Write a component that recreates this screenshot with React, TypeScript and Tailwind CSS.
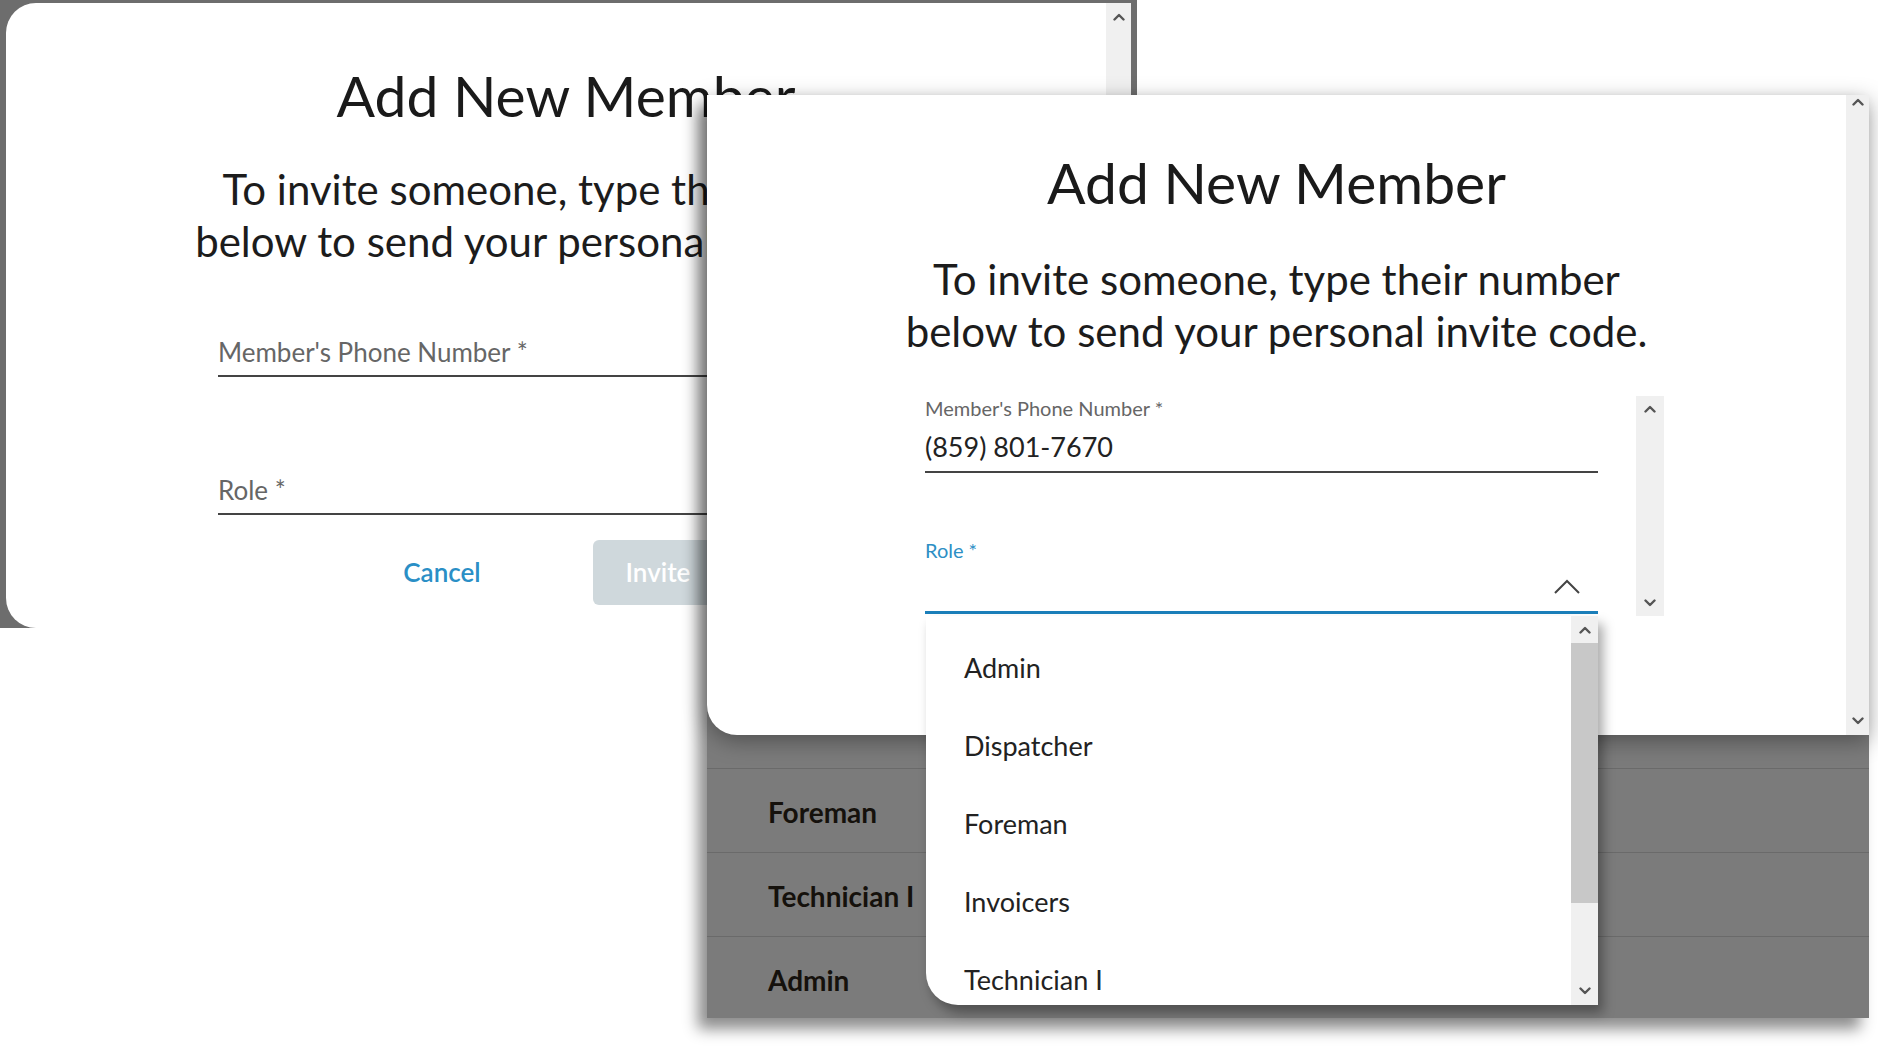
import React from "react";

const MENU_ROLES = ["Admin", "Dispatcher", "Foreman", "Invoicers", "Technician I"];
const TABLE_ROLES = ["Foreman", "Technician I", "Admin"];

function Arrow({ up }: { up?: boolean }) {
  return (
    <svg width="12" height="8" viewBox="0 0 12 8" fill="none" stroke="#555" strokeWidth="2.4" strokeLinecap="round" strokeLinejoin="round">
      {up ? <polyline points="1.5,6.5 6,2 10.5,6.5" /> : <polyline points="1.5,1.5 6,6 10.5,1.5" />}
    </svg>
  );
}

function BackShot() {
  return (
    <div className="absolute left-0 top-0 w-[1137px] h-[628px] bg-[#6d6d6d] pt-[3px] px-[6px]">
      <div className="flex h-full bg-white rounded-l-[30px] overflow-hidden">
        <div className="flex-1 flex flex-col items-center pt-[60px] pl-[20px]">
          <h1 className="text-[57px] leading-[64px] text-[#1a1a1a]">Add New Member</h1>
          <p className="mt-[36px] text-[42px] leading-[52px] text-center text-[#1c1c1c]">
            To invite someone, type their number
            <br />
            below to send your personal invite code.
          </p>
          <div className="mt-[70px] mr-[23px] w-[673px] flex flex-col">
            <div className="border-b-2 border-[#444] pb-[8px]">
              <span className="block text-[26px] leading-[30px] text-[#666]">Member's Phone Number *</span>
            </div>
            <div className="mt-[98px] border-b-2 border-[#444] pb-[8px]">
              <span className="block text-[26px] leading-[30px] text-[#666]">Role *</span>
            </div>
          </div>
          <div className="mt-[25px] mr-[32px] flex gap-[86px]">
            <button className="w-[130px] h-[65px] rounded-[6px] text-[26px] font-semibold text-[#2a8fc6]">Cancel</button>
            <button className="w-[130px] h-[65px] rounded-[6px] bg-[#cfd8dc] text-[26px] font-semibold text-white">Invite</button>
          </div>
        </div>
        <div className="w-[25px] bg-[#f0f0f0] flex justify-center pt-[10px]">
          <Arrow up />
        </div>
      </div>
    </div>
  );
}

function FrontShot() {
  return (
    <div className="absolute left-[707px] top-[95px] w-[1162px] h-[923px] bg-[#7b7b7b] shadow-[-9px_11px_14px_rgba(0,0,0,0.45)]">
      {/* table behind the overlay */}
      <div className="pt-[589px] flex flex-col">
        <div className="h-[84px] flex items-center pl-[61px] pb-[14px]">
          <span className="text-[28px] font-bold text-[#15110c]">Dispatcher</span>
        </div>
        {TABLE_ROLES.map((r) => (
          <div key={r} className="h-[84px] border-t border-[#6a6a6a] flex items-center pl-[61px] pt-[2px]">
            <span className="text-[28px] font-bold text-[#15110c]">{r}</span>
          </div>
        ))}
      </div>

      {/* modal */}
      <div className="absolute left-0 top-0 right-0 h-[640px] flex bg-white rounded-bl-[30px] shadow-[0_6px_22px_rgba(0,0,0,0.35)]">
        <div className="flex-1 flex flex-col items-center pt-[55px]">
          <h1 className="text-[57px] leading-[64px] text-[#1a1a1a]">Add New Member</h1>
          <p className="mt-[39px] text-[42px] leading-[52px] text-center text-[#1c1c1c]">
            To invite someone, type their number
            <br />
            below to send your personal invite code.
          </p>
          <div className="mt-[39px] self-stretch pl-[218px] flex h-[220px]">
            <div className="w-[673px] flex flex-col">
              <div className="border-b-2 border-[#444] pb-[7px] pt-[1px]">
                <span className="block text-[20px] leading-[22px] text-[#666]">Member's Phone Number *</span>
                <span className="block mt-[11px] text-[27px] leading-[34px] text-[#222]">(859) 801-7670</span>
              </div>
              <div className="mt-[66px] border-b-[3px] border-[#1b7fba]">
                <span className="block text-[20px] leading-[22px] text-[#2d8fc5]">Role *</span>
                <div className="h-[50px] flex items-center justify-end pr-[17px]">
                  <svg width="28" height="16" viewBox="0 0 28 16" fill="none" stroke="#444" strokeWidth="2">
                    <polyline points="2,15 14,3 26,15" />
                  </svg>
                </div>
              </div>
            </div>
            <div className="ml-[38px] w-[28px] bg-[#f0f0f0] flex flex-col items-center justify-between py-[9px]">
              <Arrow up />
              <Arrow />
            </div>
          </div>
        </div>
        <div className="w-[23px] bg-[#f0f0f0] flex flex-col items-center justify-between pt-[3px] pb-[10px]">
          <Arrow up />
          <Arrow />
        </div>
      </div>

      {/* open role menu */}
      <div className="absolute left-[219px] top-[521px] w-[672px] h-[389px] flex bg-white rounded-bl-[32px] overflow-hidden shadow-[5px_8px_12px_rgba(0,0,0,0.35)]">
        <ul className="flex-1 pt-[13px]">
          {MENU_ROLES.map((r) => (
            <li key={r} className="h-[78px] flex items-center pl-[38px] text-[27px] text-[#222]">
              {r}
            </li>
          ))}
        </ul>
        <div className="w-[27px] bg-[#f0f0f0] flex flex-col">
          <div className="h-[27px] flex items-center justify-center">
            <Arrow up />
          </div>
          <div className="h-[260px] bg-[#c8c8c8]" />
          <div className="flex-1 flex items-end justify-center pb-[10px]">
            <Arrow />
          </div>
        </div>
      </div>
    </div>
  );
}

export default function App() {
  return (
    <div className="relative w-[1878px] h-[1048px] bg-white overflow-hidden font-['Lato',sans-serif]">
      <BackShot />
      <FrontShot />
    </div>
  );
}
